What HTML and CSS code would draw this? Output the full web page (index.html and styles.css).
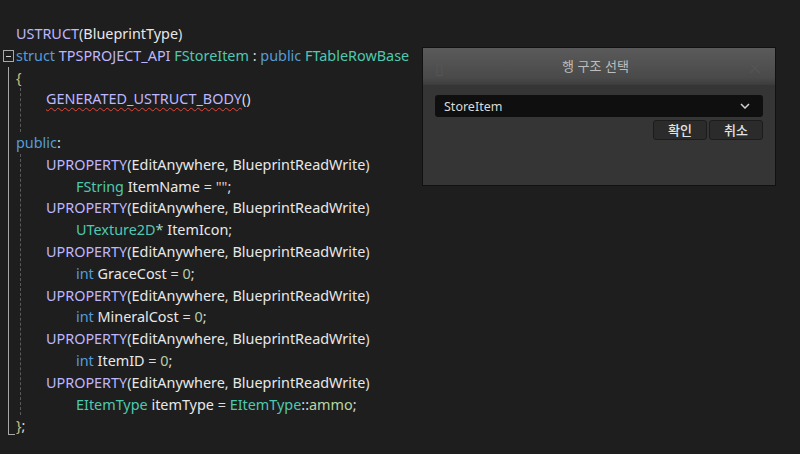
FILE: index.html
```html
<!DOCTYPE html>
<html lang="ko">
<head>
    <meta charset="UTF-8">
    <title>FStoreItem</title>
    <link rel="stylesheet" href="styles.css">
</head>
<body>
    <div class="editor">
        <div class="line"><span class="mac">USTRUCT</span>(<span class="id">BlueprintType</span>)</div>
        <div class="line head"><span class="fold-box"></span><span><span class="kw">struct</span> <span class="mac">TPSPROJECT_API</span> <span class="ty">FStoreItem</span> : <span class="kw">public</span> <span class="ty">FTableRowBase</span></span></div>
        <div class="fold">
            <div class="line"><span class="br">{</span></div>
            <div class="block">
                <div class="line"><span class="mac squiggle">GENERATED_USTRUCT_BODY</span>()</div>
                <div class="line"></div>
            </div>
            <div class="line"><span class="kw">public</span>:</div>
            <div class="block">
                <div class="line"><span class="mac">UPROPERTY</span>(<span class="id">EditAnywhere</span>, <span class="id">BlueprintReadWrite</span>)</div>
                <div class="line in"><span class="ty">FString</span> <span class="id">ItemName</span> = <span class="str">""</span>;</div>
                <div class="line"><span class="mac">UPROPERTY</span>(<span class="id">EditAnywhere</span>, <span class="id">BlueprintReadWrite</span>)</div>
                <div class="line in"><span class="ty">UTexture2D</span><span class="op">*</span> <span class="id">ItemIcon</span>;</div>
                <div class="line"><span class="mac">UPROPERTY</span>(<span class="id">EditAnywhere</span>, <span class="id">BlueprintReadWrite</span>)</div>
                <div class="line in"><span class="kw">int</span> <span class="id">GraceCost</span> = <span class="num">0</span>;</div>
                <div class="line"><span class="mac">UPROPERTY</span>(<span class="id">EditAnywhere</span>, <span class="id">BlueprintReadWrite</span>)</div>
                <div class="line in"><span class="kw">int</span> <span class="id">MineralCost</span> = <span class="num">0</span>;</div>
                <div class="line"><span class="mac">UPROPERTY</span>(<span class="id">EditAnywhere</span>, <span class="id">BlueprintReadWrite</span>)</div>
                <div class="line in"><span class="kw">int</span> <span class="id">ItemID</span> = <span class="num">0</span>;</div>
                <div class="line"><span class="mac">UPROPERTY</span>(<span class="id">EditAnywhere</span>, <span class="id">BlueprintReadWrite</span>)</div>
                <div class="line in"><span class="ty">EItemType</span> <span class="id">itemType</span> = <span class="ty">EItemType</span>::<span class="enum">ammo</span>;</div>
            </div>
            <div class="line"><span class="br">}</span>;</div>
        </div>
    </div>

    <div class="dialog">
        <div class="dialog-title">
            <span class="ghost">▯</span>
            <span class="title-text">행 구조 선택</span>
            <span class="ghost">×</span>
        </div>
        <div class="dialog-body">
            <div class="combo">
                <span>StoreItem</span>
                <svg class="chevron" width="10" height="6" viewBox="0 0 10 6">
                    <path d="M1 1 L5 5 L9 1" fill="none" stroke="#d0d0d0" stroke-width="1.5"/>
                </svg>
            </div>
            <div class="actions">
                <button class="btn">확인</button>
                <button class="btn">취소</button>
            </div>
        </div>
    </div>
</body>
</html>
```

FILE: styles.css
```css
body {
    margin: 0;
    background-color: #1e1e1e;
    font-family: "Noto Sans", "Noto Sans CJK KR", sans-serif;
    height: 454px;
    overflow: hidden;
}

.editor {
    padding-top: 23px;
    font-size: 14.4px;
    color: #dcdcdc;
}

.line {
    height: 21.8px;
    line-height: 21.8px;
    padding-left: 16px;
    white-space: pre;
}

.head {
    display: flex;
    align-items: center;
    padding-left: 3px;
}

.fold-box {
    width: 9px;
    height: 10px;
    border: 1px solid #a8a8a8;
    margin-right: 2px;
    position: relative;
}

.fold-box::after {
    content: "";
    position: absolute;
    left: 2px;
    right: 2px;
    top: 5px;
    border-top: 1px solid #d0d0d0;
}

.fold {
    margin-left: 8px;
    border-left: 1px solid #a8a8a8;
}

.fold::after {
    content: "";
    display: block;
    width: 6px;
    margin-top: -3px;
    border-bottom: 1px solid #a8a8a8;
}

.fold .line {
    padding-left: 7px;
}

.block {
    margin-left: 11px;
    border-left: 1px dashed #5a5a5a;
}

.block .line {
    padding-left: 25px;
}

.block .line.in {
    padding-left: 55px;
}

.mac { color: #beb7ff; }
.kw { color: #569cd6; }
.ty { color: #4ec9b0; }
.op { color: #9fd8c8; }
.id { color: #e8e8e8; }
.br { color: #d7ba7d; }
.num { color: #b5cea8; }
.enum { color: #b8d7a3; }
.str { color: #e2cbb8; }

.squiggle {
    text-decoration: underline wavy #e5483d;
    text-decoration-thickness: 1px;
    text-underline-offset: 3px;
}

/* floating dialog */
.dialog {
    position: absolute;
    left: 422px;
    top: 47px;
    width: 352px;
    height: 137px;
    border: 1px solid #111;
    background-color: #353535;
    font-family: "Noto Sans CJK KR", "Noto Sans", sans-serif;
}

.dialog-title {
    height: 37px;
    display: flex;
    align-items: center;
    justify-content: space-between;
    padding: 0 12px;
    background: linear-gradient(#5a5a5a, #4a4a4a 80%, #3c3c3c);
}

.title-text {
    color: #bdbdbd;
    font-size: 13px;
    margin-top: -2px;
}

.ghost {
    color: #555;
    font-size: 16px;
}

.dialog-body {
    padding: 10px 12px 0 12px;
}

.combo {
    height: 22px;
    background-color: #0f0f0f;
    border-radius: 3px;
    display: flex;
    align-items: center;
    justify-content: space-between;
    padding: 0 13px 0 9px;
    color: #dadada;
    font-family: "Noto Sans", sans-serif;
    font-size: 12.5px;
}

.actions {
    display: flex;
    justify-content: flex-end;
    gap: 2px;
    margin-top: 3px;
}

.btn {
    width: 54px;
    height: 20px;
    padding: 0;
    background-color: #2b2b2b;
    border: 1px solid #1c1c1c;
    border-radius: 3px;
    color: #e4e4e4;
    font-family: "Noto Sans CJK KR", sans-serif;
    font-size: 13px;
    font-weight: 500;
    line-height: 18px;
}
```
